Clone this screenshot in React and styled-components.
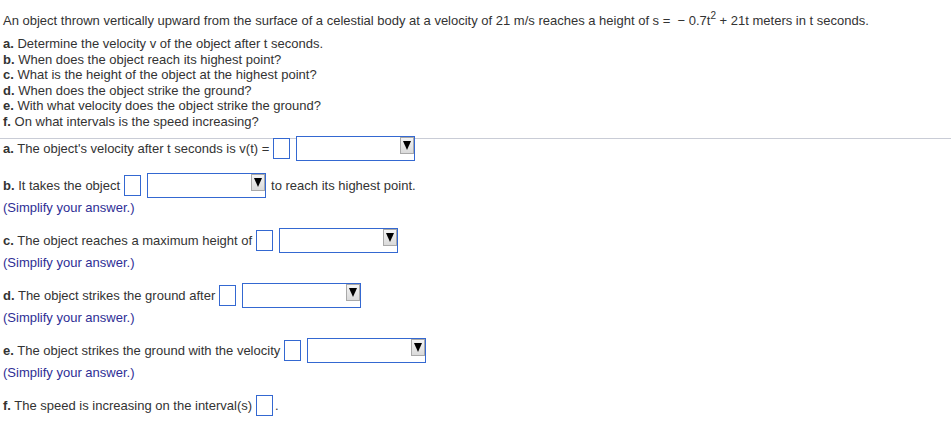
import React from "react";
import styled, { createGlobalStyle } from "styled-components";

const Global = createGlobalStyle`
  html, body { margin: 0; padding: 0; background: #fff; }
  body { font-family: "Liberation Sans", Arial, sans-serif; font-size: 13px; color: #333; }
`;

const Page = styled.div`
  width: 951px;
  height: 421px;
  overflow: hidden;
`;

const Question = styled.div`
  padding: 13px 3px 8px 3px;
  border-bottom: 1px solid #c9ccd6;
`;

const Intro = styled.div`
  line-height: 16px;
  margin-bottom: 7px;
`;

const Sup = styled.sup`
  font-size: 10px;
  vertical-align: 6px;
  line-height: 0;
`;

const List = styled.div`
  line-height: 15.6px;
`;

const Label = styled.b`
  font-weight: bold;
`;

const Answers = styled.div`
  padding: 0 3px;
`;

const Block = styled.div`
  margin-top: ${(p) => p.$mt}px;
`;

const Row = styled.div`
  display: flex;
  align-items: center;
  height: 25px;
  white-space: nowrap;
`;

const Box = styled.span`
  display: inline-block;
  box-sizing: border-box;
  width: 17px;
  height: 21px;
  border: 1px solid #3468d1;
  margin: 0 ${(p) => p.$mr ?? 6}px 0 4px;
  background: #fff;
`;

const Select = styled.span`
  position: relative;
  display: inline-block;
  box-sizing: border-box;
  width: 119px;
  height: 25px;
  border: 1px solid #3468d1;
  background: #fff;
  margin-right: ${(p) => p.$mr ?? 0}px;
`;

const Arrow = styled.span`
  position: absolute;
  top: 0;
  right: 0;
  width: 14px;
  height: 17px;
  box-sizing: border-box;
  border: 1px solid #a9a9a9;
  background: linear-gradient(#f4f4f4, #dadada);
  display: flex;
  align-items: center;
  justify-content: center;
`;

const Tri = styled.svg`
  display: block;
`;

const Hint = styled.div`
  color: #2e2e95;
  line-height: 16px;
  margin-top: 2px;
`;

const Dropdown = ({ mr }) => (
  <Select $mr={mr}>
    <Arrow>
      <Tri width="8" height="9" viewBox="0 0 8 9">
        <polygon points="0,0 8,0 4,9" fill="#000" />
      </Tri>
    </Arrow>
  </Select>
);

export default function App() {
  return (
    <Page>
      <Global />
      <Question>
        <Intro>
          An object thrown vertically upward from the surface of a celestial body at a velocity of 21 m/s reaches a height of s
          {" = "}&nbsp;− 0.7t<Sup>2</Sup> + 21t meters in t seconds.
        </Intro>
        <List>
          <div><Label>a.</Label> Determine the velocity v of the object after t seconds.</div>
          <div><Label>b.</Label> When does the object reach its highest point?</div>
          <div><Label>c.</Label> What is the height of the object at the highest point?</div>
          <div><Label>d.</Label> When does the object strike the ground?</div>
          <div><Label>e.</Label> With what velocity does the object strike the ground?</div>
          <div><Label>f.</Label> On what intervals is the speed increasing?</div>
        </List>
      </Question>
      <Answers>
        <Block $mt={-3}>
          <Row>
            <span><Label>a.</Label> The object's velocity after t seconds is v(t) =</span>
            <Box />
            <Dropdown />
          </Row>
        </Block>
        <Block $mt={12}>
          <Row>
            <span><Label>b.</Label> It takes the object</span>
            <Box />
            <Dropdown mr={5} />
            <span>to reach its highest point.</span>
          </Row>
          <Hint>(Simplify your answer.)</Hint>
        </Block>
        <Block $mt={12}>
          <Row>
            <span><Label>c.</Label> The object reaches a maximum height of</span>
            <Box />
            <Dropdown />
          </Row>
          <Hint>(Simplify your answer.)</Hint>
        </Block>
        <Block $mt={12}>
          <Row>
            <span><Label>d.</Label> The object strikes the ground after</span>
            <Box />
            <Dropdown />
          </Row>
          <Hint>(Simplify your answer.)</Hint>
        </Block>
        <Block $mt={12}>
          <Row>
            <span><Label>e.</Label> The object strikes the ground with the velocity</span>
            <Box />
            <Dropdown />
          </Row>
          <Hint>(Simplify your answer.)</Hint>
        </Block>
        <Block $mt={12}>
          <Row>
            <span><Label>f.</Label> The speed is increasing on the interval(s)</span>
            <Box $mr={2} />
            <span>.</span>
          </Row>
        </Block>
      </Answers>
    </Page>
  );
}
